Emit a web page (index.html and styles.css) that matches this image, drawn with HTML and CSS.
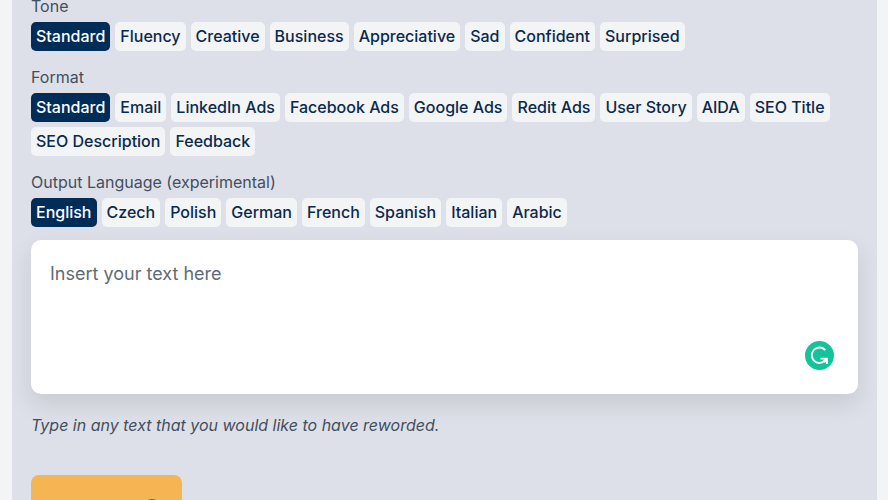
FILE: index.html
```html
<!DOCTYPE html>
<html lang="en">
<head>
    <meta charset="UTF-8">
    <meta name="viewport" content="width=device-width, initial-scale=1.0">
    <title>Text Rewriter</title>
    <link rel="stylesheet" href="styles.css">
</head>
<body>

    <form class="panel">
        <!-- Tone -->
        <div class="option-group" role="group" aria-labelledby="tone-label">
            <div class="option-label" id="tone-label">Tone</div>
            <div class="options">
                <button type="button" class="option active">Standard</button>
                <button type="button" class="option">Fluency</button>
                <button type="button" class="option">Creative</button>
                <button type="button" class="option">Business</button>
                <button type="button" class="option">Appreciative</button>
                <button type="button" class="option">Sad</button>
                <button type="button" class="option">Confident</button>
                <button type="button" class="option">Surprised</button>
            </div>
        </div>

        <!-- Format -->
        <div class="option-group" role="group" aria-labelledby="format-label">
            <div class="option-label" id="format-label">Format</div>
            <div class="options">
                <button type="button" class="option active">Standard</button>
                <button type="button" class="option">Email</button>
                <button type="button" class="option">LinkedIn Ads</button>
                <button type="button" class="option">Facebook Ads</button>
                <button type="button" class="option">Google Ads</button>
                <button type="button" class="option">Redit Ads</button>
                <button type="button" class="option">User Story</button>
                <button type="button" class="option">AIDA</button>
                <button type="button" class="option">SEO Title</button>
                <button type="button" class="option">SEO Description</button>
                <button type="button" class="option">Feedback</button>
            </div>
        </div>

        <!-- Output language -->
        <div class="option-group" role="group" aria-labelledby="language-label">
            <div class="option-label" id="language-label">Output Language (experimental)</div>
            <div class="options">
                <button type="button" class="option active">English</button>
                <button type="button" class="option">Czech</button>
                <button type="button" class="option">Polish</button>
                <button type="button" class="option">German</button>
                <button type="button" class="option">French</button>
                <button type="button" class="option">Spanish</button>
                <button type="button" class="option">Italian</button>
                <button type="button" class="option">Arabic</button>
            </div>
        </div>

        <!-- Text to rewrite -->
        <div class="text-box">
            <textarea class="text-input" id="text-input" placeholder="Insert your text here"></textarea>
            <svg class="checker-badge" viewBox="0 0 30 30" aria-hidden="true">
                <circle cx="15" cy="15" r="15" fill="#15c39a"/>
                <path d="M21 9.4A8 8 0 1 0 20.2 20.8" fill="none" stroke="#fff" stroke-width="2"/>
                <path d="M16 17.2h7.6v6.6h-2v-2.6l-1.4 1.2-1.6-1.6 1.6-1.6H16z" fill="#fff"/>
            </svg>
        </div>
        <label class="hint" for="text-input">Type in any text that you would like to have reworded.</label>

        <button type="button" class="submit" aria-label="Submit">
            <svg class="submit-icon" viewBox="0 0 20 20" aria-hidden="true">
                <circle cx="10" cy="10" r="9" fill="none" stroke="#7d5c2b" stroke-width="2"/>
            </svg>
        </button>
    </form>

    <script>
        // Keep one option active in each group
        document.querySelectorAll('.options').forEach((group) => {
            group.addEventListener('click', (event) => {
                if (!event.target.classList.contains('option')) return;
                group.querySelector('.active').classList.remove('active');
                event.target.classList.add('active');
            });
        });
    </script>

</body>
</html>
```
FILE: styles.css
```css
/* General Body Styling */
* {
    box-sizing: border-box;
}

html {
    scrollbar-width: none;
}

body {
    margin: 0;
    padding: 0 11px 0 12px;
    background: #f3f4f5;
    color: #434f5e;
    font-family: Inter, "Liberation Sans", sans-serif;
    font-size: 16px;
}

button, textarea {
    font: inherit;
    border: 0;
}

.panel {
    padding: 0 19px 20px;
    background: #dde0e8;
}

/* Option Groups */
.option-group {
    margin-bottom: 20px;
}

.option-label {
    line-height: 12px;
    margin-bottom: 10px;
}

.options {
    display: flex;
    flex-wrap: wrap;
    gap: 5px;
}

.option {
    padding: 0 5px;
    line-height: 29px;
    border-radius: 5px;
    background: #f3f4f6;
    color: #0a2a4d;
    font-weight: 500;
    cursor: pointer;
}

.option.active {
    background: #002d57;
    color: #fff;
}

/* Text Box */
.text-box {
    position: relative;
    margin-top: -7px;
}

.text-input {
    display: block;
    width: 100%;
    height: 154px;
    padding: 20px 19px;
    border-radius: 10px;
    background: #fff;
    box-shadow: 0 10px 24px rgba(0, 0, 0, 0.1);
    color: #434f5e;
    font-size: 18px;
    line-height: 28px;
    outline: none;
    resize: none;
}

.text-input::placeholder {
    color: #5f6b76;
    opacity: 1;
}

.checker-badge {
    position: absolute;
    right: 24px;
    bottom: 24px;
    width: 29px;
    height: 29px;
}

.hint {
    display: block;
    margin: 19px 0 38px;
    font-style: italic;
    line-height: 24px;
}

/* Submit Button */
.submit {
    display: flex;
    justify-content: flex-end;
    align-items: center;
    width: 151px;
    height: 68px;
    padding: 0 20px;
    border-radius: 8px;
    background: #f6b553;
    cursor: pointer;
}

.submit-icon {
    width: 20px;
    height: 20px;
}
```
